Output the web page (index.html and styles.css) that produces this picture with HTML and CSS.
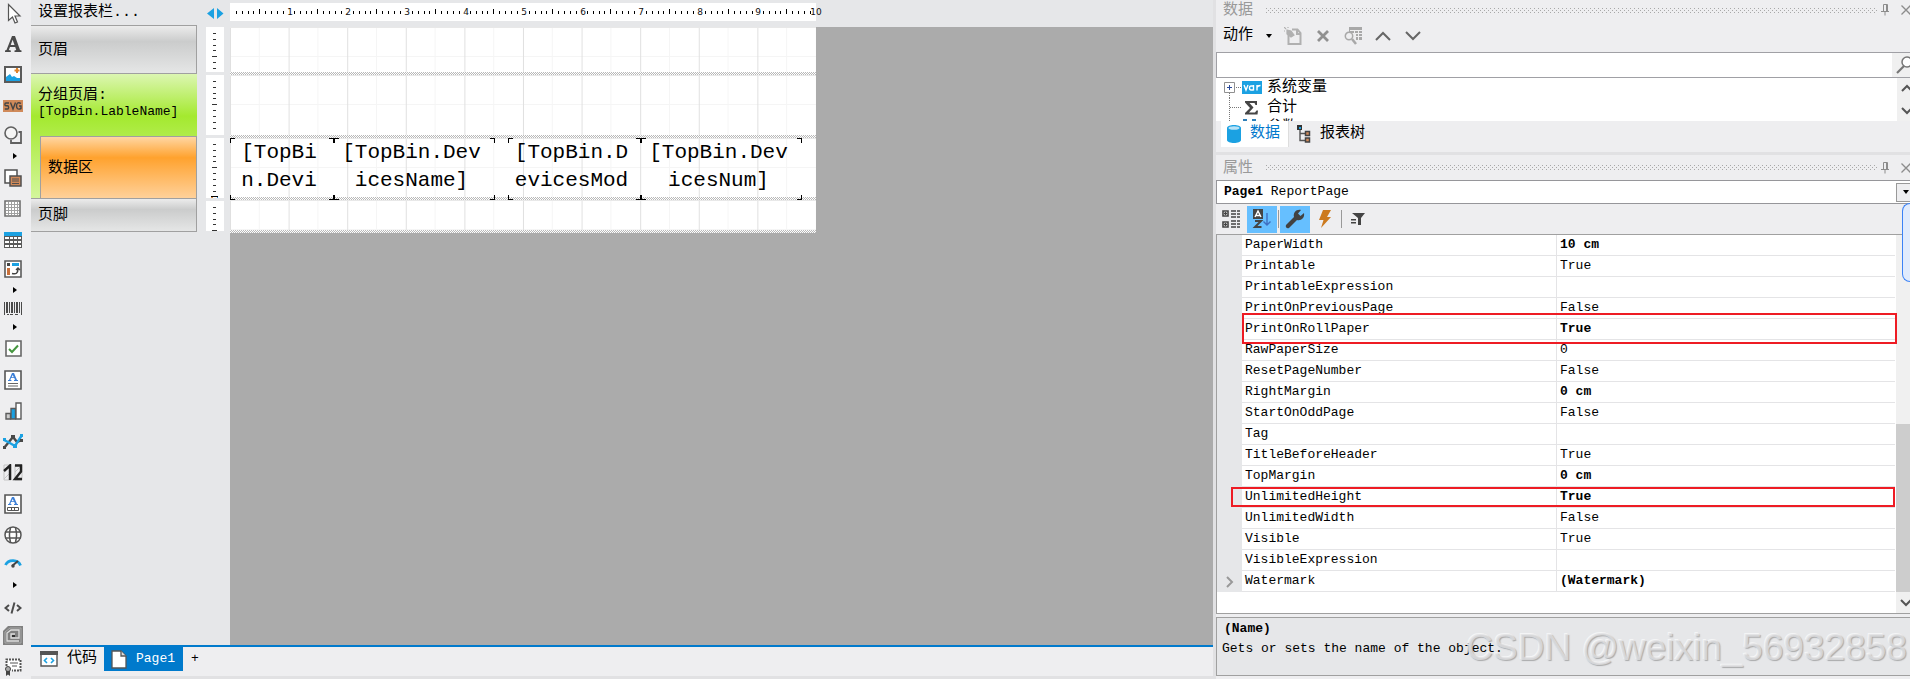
FILE: index.html
```html
<!DOCTYPE html>
<html lang="zh-CN">
<head>
<meta charset="utf-8">
<title>Report designer</title>
<link rel="stylesheet" href="styles.css">
</head>
<body>
<svg class="defs" aria-hidden="true">
  <symbol id="ticks-h" viewBox="0 0 59 18"><path fill="#000" d="M6 8h1v3h-1zM12 8h1v3h-1zM18 8h1v3h-1zM23 8h1v3h-1zM29 6h1v5h-1zM35 8h1v3h-1zM41 8h1v3h-1zM47 8h1v3h-1zM53 8h1v3h-1z"/></symbol>
  <symbol id="ticks-v" viewBox="0 0 18 60"><path fill="#333" d="M7 6h3v1h-3zM7 12h3v1h-3zM7 18h3v1h-3zM7 23h3v1h-3zM6 29h5v1h-5zM7 35h3v1h-3zM7 41h3v1h-3zM7 47h3v1h-3zM7 53h3v1h-3z"/></symbol>
  <symbol id="pin" viewBox="0 0 9 12"><path d="M2.500 7V.5h4V7M5.500 1v6M0 7.500h8M4 8v3.500" fill="none" stroke="#8c8c8c"/></symbol>
  <symbol id="close" viewBox="0 0 9 10"><path d="M.5 .5l9 9M9.500 .5l-9 9" fill="none" stroke="#8c8c8c" stroke-width="1.300"/></symbol>
</svg>
<div class="app">
  <nav class="tools" aria-label="工具">
    <button class="tool short" aria-label="选择"><svg width="20" height="22" viewBox="0 0 20 22"><path d="M5.500 1.500v16l4-3.500 2.500 6 2.500-1-2.500-6H17z" fill="#fff" stroke="#555" stroke-width="1.200"/></svg></button>
    <button class="tool" aria-label="文本"><svg width="18" height="18" viewBox="0 0 18 18"><path fill="#4a4a4a" fill-rule="evenodd" d="M8 1h3l5 14 1.500.5V17h-7v-1.500l1.700-.5-1-3H6l-1.200 3 2 .5V17H1v-1.500l1.500-.5zM8.600 4.800L6.700 10h3.800z"/></svg></button>
    <button class="tool" aria-label="图片"><svg width="18" height="17" viewBox="0 0 18 17"><path d="M1 1h16v15H1z" fill="#fff" stroke="#5a5a5a" stroke-width="2"/><path d="M2 11l4-3 2 3 2-1 3 2h3v3H2z" fill="#1ba1e2"/><path d="M13 2v5M10.500 4.500h5" stroke="#e0822a" stroke-width="2"/></svg></button>
    <button class="tool" aria-label="SVG"><svg width="20" height="12" viewBox="0 0 20 12"><path fill="#d08a5a" d="M0 0h20v12H0z"/><path d="M6 3H3C1.500 3 1.500 5.800 3 5.800h1.500c1.500 0 1.500 3.200 0 3.200H1.800M7.500 2.500L10 9l2.500-6.500M18 3.500c-3-2-4.500 0-4.500 2.500s1.500 4 4.500 2.500V6h-2" fill="none" stroke="#444" stroke-width="1.400"/></svg></button>
    <button class="tool short" aria-label="形状"><svg width="18" height="18" viewBox="0 0 18 18"><circle cx="7" cy="7" r="6" fill="#f5f5f5" stroke="#606060" stroke-width="1.600"/><path d="M14.500 6H17v11H7v-3" fill="none" stroke="#606060" stroke-width="1.800"/></svg></button>
    <button class="more" aria-label="更多形状"></button>
    <button class="tool" aria-label="子报表"><svg width="18" height="18" viewBox="0 0 18 18"><path d="M1 1h12v13H1z" fill="#fff" stroke="#505050" stroke-width="1.500"/><path d="M6 7h11v10H6z" fill="#d08a5a" stroke="#505050" stroke-width="1.500"/><path d="M8 10h7M8 12h7M8 14.500h7" stroke="#505050"/></svg></button>
    <button class="tool" aria-label="表格线"><svg width="18" height="18" viewBox="0 0 18 18"><path d="M1 1h15v15H1z" fill="#fff" stroke="#707070" stroke-width="1.600"/><path d="M4.500 2v13M7.500 2v13M10.500 2v13M13.500 2v13M2 4.500h13M2 7.500h13M2 10.500h13M2 13.500h13" stroke="#a0a0a0"/></svg></button>
    <button class="tool" aria-label="表格"><svg width="18" height="16" viewBox="0 0 18 16"><path fill="#5a5a5a" d="M0 3h18v13H0z"/><path fill="#1ba1e2" d="M0 0h18v4H0z"/><path fill="#fff" d="M1 5h4v2H1zM6 5h3v2H6zM10 5h3v2h-3zM14 5h3v2h-3zM1 9h4v2H1zM6 9h3v2H6zM10 9h3v2h-3zM14 9h3v2h-3zM1 13h4v2H1zM6 13h3v2H6zM10 13h3v2h-3zM14 13h3v2h-3z"/></svg></button>
    <button class="tool short" aria-label="矩阵"><svg width="18" height="18" viewBox="0 0 18 18"><path d="M1 1h16v16H1z" fill="#fff" stroke="#5a5a5a" stroke-width="1.600"/><path fill="#444" d="M3 3h3v3H3z"/><path fill="#1ba1e2" d="M8 3h7v3H8z"/><path fill="#c9703a" d="M3 8h3v7H3z"/><path d="M8 13.500c4 1 6 0 6-5M12 10l2-2 2 2" fill="none" stroke="#444" stroke-width="1.500"/></svg></button>
    <button class="more" aria-label="更多矩阵"></button>
    <button class="tool low" aria-label="条码"><svg width="18" height="13" viewBox="0 0 18 13"><path fill="#4a4a4a" d="M0 0h1v13H0zM2 0h2v11H2zM5 0h1v11H5zM7 0h2v11H7zM10 0h1v11h-1zM12 0h2v11h-2zM15 0h1v11h-1zM17 0h1v13h-1zM3 12h2v1H3zM6 12h3v1H6zM11 12h3v1h-3z"/></svg></button>
    <button class="more" aria-label="更多条码"></button>
    <button class="tool" aria-label="复选框"><svg width="17" height="17" viewBox="0 0 17 17"><path d="M1 1h15v15H1z" fill="#fff" stroke="#666" stroke-width="1.600"/><path d="M4 9l3 3 6-6.500" fill="none" stroke="#45963f" stroke-width="2"/></svg></button>
    <button class="tool" aria-label="富文本"><svg width="18" height="20" viewBox="0 0 18 20"><path d="M1 1h16v18H1z" fill="#fff" stroke="#555" stroke-width="1.600"/><path fill="#3d7fd6" fill-rule="evenodd" d="M8 3h2l3 7h1v1h-4v-1h1l-.7-2H7l-.6 2h1v1H4v-1h1zM8.700 5L7.600 7.200h2.200z"/><path d="M4 13.500h10M4 16h10" stroke="#666"/></svg></button>
    <button class="tool" aria-label="图表"><svg width="17" height="18" viewBox="0 0 17 18"><path d="M1 11.500h4.500V17H1z" fill="#ccc" stroke="#5a5a5a" stroke-width="1.400"/><path d="M6 6.500h4.500V17H6z" fill="#1ba1e2" stroke="#5a5a5a" stroke-width="1.400"/><path d="M11 1h5v16h-5z" fill="#fff" stroke="#5a5a5a" stroke-width="1.400"/></svg></button>
    <button class="tool" aria-label="迷你图"><svg width="20" height="16" viewBox="0 0 20 16"><path d="M1 14L10 3l4 5 5-2" fill="none" stroke="#484848" stroke-width="2.400"/><path d="M1 6l4 2 7 4 7-11" fill="none" stroke="#1ba1e2" stroke-width="2.400"/><path fill="#484848" d="M8 1h4v4H8zM0 12h3v3H0zM17 5h3v3h-3z"/><path fill="#1ba1e2" d="M0 4h3v3H0zM10 10h4v4h-4zM17 0h3v3h-3z"/></svg></button>
    <button class="tool" aria-label="邮政编码"><svg width="20" height="17" viewBox="0 0 20 17"><path d="M1 1h7v15H1zM12 1h7v15h-7zM1 8l7-7M1 15l7-7M12 8l7-7" fill="none" stroke="#c4c4c4"/><path d="M1 7l6-5.500V16M12 1.500h6v6L12 15h7" fill="none" stroke="#222" stroke-width="2.400"/></svg></button>
    <button class="tool" aria-label="单元格文本"><svg width="18" height="20" viewBox="0 0 18 20"><path d="M1 1h16v18H1z" fill="#fff" stroke="#555" stroke-width="1.600"/><path fill="#3d7fd6" fill-rule="evenodd" d="M8 3h2l3 7h1v1h-4v-1h1l-.7-2H7l-.6 2h1v1H4v-1h1zM8.700 5L7.600 7.200h2.200z"/><path d="M3.500 13.500h11v3h-11zM7.500 13v4M10.500 13v4" fill="none" stroke="#555"/></svg></button>
    <button class="tool" aria-label="地图"><svg width="18" height="18" viewBox="0 0 18 18"><circle cx="9" cy="9" r="8" fill="#fff" stroke="#555" stroke-width="1.500"/><path d="M1 6h16M1 12h16M6.500 2c-1.500 5-1.500 9 0 14M11.500 2c1.500 5 1.500 9 0 14" fill="none" stroke="#555" stroke-width="1.500"/></svg></button>
    <button class="tool low" aria-label="仪表"><svg width="18" height="11" viewBox="0 0 18 11"><path d="M1.500 8A8 7 0 0 1 16.500 8.500" fill="none" stroke="#1ba1e2" stroke-width="2.800"/><path d="M8 9l6-5" stroke="#444" stroke-width="2"/><circle cx="9" cy="9" r="1.700" fill="#444"/></svg></button>
    <button class="more tall" aria-label="更多仪表"></button>
    <button class="tool low" aria-label="HTML"><svg width="18" height="12" viewBox="0 0 18 12"><path d="M5 3L1.500 6 5 9M13 3l3.500 3L13 9M10.500.5l-3 11" fill="none" stroke="#4c4c4c" stroke-width="2"/></svg></button>
    <button class="tool" aria-label="RFID"><svg width="20" height="20" viewBox="0 0 20 20"><path d="M5 0h15v19H0V5z" fill="#808080"/><path d="M16 15H4V7l4-3h8v8H8V8h4" fill="none" stroke="#ddd" stroke-width="1.300"/><path d="M18 17H2V6l5-4h11z" fill="none" stroke="#a8a8a8"/><path fill="#333" d="M9 9h3v2H9z"/></svg></button>
    <button class="tool" aria-label="签名"><svg width="18" height="18" viewBox="0 0 18 18"><path d="M2.500 8V1.500h14v11H8" fill="#fff" stroke="#555" stroke-width="2" stroke-dasharray="2 1"/><path d="M6 5h8M8 8h5" stroke="#555"/><circle cx="4" cy="11" r="2.500" fill="#aaa" stroke="#444"/><path d="M2 13v5l2-1.500L6 18v-5z" fill="#444"/></svg></button>
  </nav>

  <main class="designer">
    <div class="work">
      <section class="bands">
        <button class="setup">设置报表栏...</button>
        <div class="band grey head">页眉</div>
        <div class="band green">
          <p>分组页眉:<br>[TopBin.LableName]</p>
          <div class="band orange">数据区</div>
        </div>
        <div class="band grey foot">页脚</div>
      </section>
      <section class="side-rulers">
        <svg class="arrows" width="18" height="11" viewBox="0 0 18 11"><path fill="#1ba1e2" d="M8 0v11L1 5.500zM11 0v11l6.500-5.500z"/></svg>
        <svg class="vr r1" width="18" height="45"><use href="#ticks-v" width="18" height="60"/></svg>
        <svg class="vr r2" width="18" height="60"><use href="#ticks-v" width="18" height="60"/></svg>
        <svg class="vr r3" width="18" height="60"><use href="#ticks-v" width="18" height="60"/><path d="M5 58h7v1h-7z"/><path fill="#d98c3f" d="M5 59h2v1h-2z"/><path fill="#2a7fd0" d="M11 59h1v1h-1z"/></svg>
        <svg class="vr r4" width="18" height="30"><use href="#ticks-v" width="18" height="60"/></svg>
      </section>
      <section class="canvas">
        <div class="top-ruler">
          <svg class="hr" width="586" height="18">
            <g><use href="#ticks-h" width="59" height="18"/><use href="#ticks-h" x="58" width="59" height="18"/><use href="#ticks-h" x="117" width="59" height="18"/><use href="#ticks-h" x="176" width="59" height="18"/><use href="#ticks-h" x="234" width="59" height="18"/><use href="#ticks-h" x="293" width="59" height="18"/><use href="#ticks-h" x="351" width="59" height="18"/><use href="#ticks-h" x="410" width="59" height="18"/><use href="#ticks-h" x="469" width="59" height="18"/><use href="#ticks-h" x="527" width="59" height="18"/></g>
            <g class="nums"><text x="60" y="12">1</text><text x="118" y="12">2</text><text x="177" y="12">3</text><text x="236" y="12">4</text><text x="294" y="12">5</text><text x="353" y="12">6</text><text x="411" y="12">7</text><text x="470" y="12">8</text><text x="528" y="12">9</text><text x="586" y="12">10</text></g>
          </svg>
        </div>
        <div class="desk">
          <div class="paper">
            <div class="strip s1"></div>
            <div class="strip s2"></div>
            <div class="strip s3">
              <div class="objects">
                <div class="obj w1">[TopBi<br>n.Devi</div>
                <div class="obj w2">[TopBin.Dev<br>icesName]</div>
                <div class="obj w3">[TopBin.D<br>evicesMod</div>
                <div class="obj w4">[TopBin.Dev<br>icesNum]</div>
              </div>
            </div>
            <div class="strip s4"></div>
          </div>
        </div>
      </section>
    </div>
    <div class="pages">
      <button class="page-tab code"><svg width="18" height="16" viewBox="0 0 18 16"><path d="M1 1h16v14H1z" fill="#fff" stroke="#555" stroke-width="1.400"/><path fill="#555" d="M0 0h18v4H0z"/><path d="M7 7L4.500 9.500 7 12M11 7l2.500 2.500L11 12" fill="none" stroke="#1ba1e2" stroke-width="1.600"/></svg>代码</button>
      <button class="page-tab active"><svg width="16" height="19" viewBox="0 0 16 19"><path d="M1 1h9l5 5v12H1z" fill="#fff" stroke="#555" stroke-width="1.300"/><path d="M10 1v5h5" fill="#ddd" stroke="#555" stroke-width="1.300"/></svg>Page1</button>
      <button class="page-tab add">+</button>
    </div>
  </main>

  <aside class="side">
    <header class="title"><span>数据</span><i class="grip"></i><svg width="9" height="12"><use href="#pin"/></svg><svg width="9" height="10"><use href="#close"/></svg></header>
    <div class="actions">
      <button class="menu">动作<i class="caret"></i></button>
      <button aria-label="新建"><svg width="18" height="18" viewBox="0 0 18 18"><path d="M4.500 8v9h12V6l-3-3.500H8M13 3v4h4" fill="none" stroke="#b0b0b0" stroke-width="2"/><path d="M0 0l2 2M4 0v1M0 4h1M3 3l4 1 3 4-3 2-4-3z" fill="#b0b0b0" stroke="#b0b0b0" stroke-width="1.200"/></svg></button>
      <button aria-label="删除"><svg width="18" height="18" viewBox="0 0 18 18"><path d="M4 4l10 10M14 4L4 14" stroke="#909090" stroke-width="2.800"/></svg></button>
      <button aria-label="查看"><svg width="18" height="18" viewBox="0 0 18 18"><path fill="#a8a8a8" d="M5 0h13v13h-6V6H5z"/><path d="M6 3.500h12M11 6.500h7M11 9.500h7M10.500 3v3M14.500 3v10" stroke="#eeeef0"/><circle cx="5" cy="9" r="3.700" fill="#eeeef0" stroke="#a8a8a8" stroke-width="1.500"/><path d="M8 12l4 5" stroke="#a8a8a8" stroke-width="2.500"/></svg></button>
      <button aria-label="上移"><svg width="18" height="18" viewBox="0 0 18 18"><path d="M2 13l7-7 7 7" fill="none" stroke="#666" stroke-width="2"/></svg></button>
      <button aria-label="下移"><svg width="18" height="18" viewBox="0 0 18 18"><path d="M2 5l7 7 7-7" fill="none" stroke="#666" stroke-width="2"/></svg></button>
    </div>
    <div class="search"><input type="text" aria-label="搜索"><button aria-label="搜索"><svg width="14" height="18" viewBox="0 0 14 18"><circle cx="11" cy="6" r="5" fill="#fff" stroke="#777" stroke-width="1.500"/><path d="M8 10l-7 7" stroke="#777" stroke-width="2.200"/></svg></button></div>
    <div class="tree">
      <ul>
        <li><svg width="38" height="20" viewBox="0 0 38 20"><path d="M.5 4.500h10v10H.5z" fill="#fff" stroke="#909090"/><path d="M3 9.500h5M5.500 7v5" stroke="#2a4a9a"/><path d="M12 9.500h6M5.500 15v5" stroke="#777" stroke-dasharray="1 1"/><path fill="#1ba1e2" d="M18 3h20v13H18z"/><path d="M20 7l2 5 2-5M29.500 7v5.500M29.500 8h-2.500c-2 0-2 4 0 4h2.500M33 12.500V7M33 9.500c.5-1.500 1.500-2 3.500-2" fill="none" stroke="#fff" stroke-width="1.400"/></svg>系统变量</li>
        <li><svg width="38" height="20" viewBox="0 0 38 20"><path d="M5.500 0v20M6 9.500h12" stroke="#777" stroke-dasharray="1 1"/><path fill="#454545" d="M21 3h12v4h-1.500l-1-2h-5l4 4.500-4.500 5H31l1.500-2H34l-.5 4H21v-1.500L26 10l-5-5.500z"/></svg>合计</li>
        <li><svg width="38" height="20" viewBox="0 0 38 20"><path d="M5.500 0v20" stroke="#777" stroke-dasharray="1 1"/><path d="M23 2h-3v14h3M28 2h3v14h-3" fill="none" stroke="#2f7fb8" stroke-width="2"/></svg>参数</li>
      </ul>
      <div class="mini-scroll"><svg width="13" height="43" viewBox="0 0 13 43"><path d="M5 13l5-5 5 5M5 30l5 5 5-5" fill="none" stroke="#555" stroke-width="2"/></svg></div>
    </div>
    <div class="side-tabs">
      <button class="on"><svg width="14" height="18" viewBox="0 0 14 18"><path fill="#1ba1e2" d="M0 3c0-4 14-4 14 0v12c0 4-14 4-14 0z"/><ellipse cx="7" cy="3" rx="5.500" ry="1.800" fill="#b8e2f6"/></svg>数据</button>
      <button><svg width="14" height="18" viewBox="0 0 14 18"><path d="M3 5v10.500h5M3 8.500h5" fill="none" stroke="#555" stroke-width="1.400"/><path fill="#333" d="M0 0h5v5H0z"/><path fill="#1ba1e2" d="M2 2h2v2H2z"/><path d="M8.500 6.500h4v4h-4zM8.500 13h4v4h-4z" fill="#d08a5a" stroke="#444" stroke-width="1.500"/></svg>报表树</button>
    </div>
    <header class="title second"><span>属性</span><i class="grip"></i><svg width="9" height="12"><use href="#pin"/></svg><svg width="9" height="10"><use href="#close"/></svg></header>
    <button class="combo" aria-haspopup="listbox"><span><b>Page1</b> ReportPage</span><span class="drop"><i class="caret"></i></span></button>
    <div class="prop-tools">
      <button aria-label="分类"><svg width="18" height="18" viewBox="0 0 18 18"><path d="M1 1h5v5H1zM1 12h5v5H1z" fill="#fff" stroke="#444" stroke-width="1.600"/><path d="M2 3.500h3M3.500 2v3M2 14.500h3M3.500 13v3M9 1h5M15 1h3M9 4h5M15 4h3M9 7h5M15 7h3M9 11h5M15 11h3M9 14h5M15 14h3M9 17h5M15 17h3" stroke="#444" stroke-width="1.300"/></svg></button>
      <button class="hot" aria-label="排序"><svg width="20" height="20" viewBox="0 0 20 20"><path fill="#444" d="M1 0h10v10H1z"/><path d="M3 8l3-6 3 6M4 6.500h4" fill="none" stroke="#fff" stroke-width="1.400"/><path d="M3 12h6l-6 6h6.500" fill="none" stroke="#444" stroke-width="2"/><path d="M15 4v12M11.500 12.500L15 16l3.500-3.500" fill="none" stroke="#3f6fc0" stroke-width="1.400"/></svg></button>
      <i class="sep"></i>
      <button class="hot" aria-label="属性"><svg width="20" height="20" viewBox="0 0 20 20"><path fill="#424242" d="M1 16l8-8c-1-4 2-8 7-7l-3 3.500 2.500 2.500L19 4c1 5-3 8-7 7l-8 8c-2 1-4-1-3-3z"/></svg></button>
      <button class="bolt" aria-label="事件"><svg width="14" height="20" viewBox="0 0 14 20"><path fill="#cc7a1e" d="M5 1h8L9 8h4L3 19l2.500-8H1z"/></svg></button>
      <i class="sep"></i>
      <button class="filter" aria-label="筛选"><svg width="14" height="14" viewBox="0 0 14 14"><path fill="#444" d="M1 1h13l-4 5v7H7V6zM0 7h5v1.500H0zM0 10h5v1.500H0z"/></svg></button>
    </div>
    <div class="props">
      <div class="props-main">
        <table>
          <colgroup><col class="c-gut"><col class="c-name"><col></colgroup>
          <tbody>
          <tr><td></td><th>PaperWidth</th><td><b>10 cm</b></td></tr>
          <tr><td></td><th>Printable</th><td>True</td></tr>
          <tr><td></td><th>PrintableExpression</th><td></td></tr>
          <tr><td></td><th>PrintOnPreviousPage</th><td>False</td></tr>
          <tr><td></td><th>PrintOnRollPaper</th><td><b>True</b></td></tr>
          <tr><td></td><th>RawPaperSize</th><td>0</td></tr>
          <tr><td></td><th>ResetPageNumber</th><td>False</td></tr>
          <tr><td></td><th>RightMargin</th><td><b>0 cm</b></td></tr>
          <tr><td></td><th>StartOnOddPage</th><td>False</td></tr>
          <tr><td></td><th>Tag</th><td></td></tr>
          <tr><td></td><th>TitleBeforeHeader</th><td>True</td></tr>
          <tr><td></td><th>TopMargin</th><td><b>0 cm</b></td></tr>
          <tr><td></td><th>UnlimitedHeight</th><td><b>True</b></td></tr>
          <tr><td></td><th>UnlimitedWidth</th><td>False</td></tr>
          <tr><td></td><th>Visible</th><td>True</td></tr>
          <tr><td></td><th>VisibleExpression</th><td></td></tr>
          <tr><td><svg width="8" height="12" viewBox="0 0 8 12"><path d="M1 1l5 5-5 5" fill="none" stroke="#999" stroke-width="2"/></svg></td><th>Watermark</th><td><b>(Watermark)</b></td></tr>
          </tbody>
        </table>
        <div class="mark m1"></div>
        <div class="mark m2"></div>
      </div>
      <div class="scroll"><div class="thumb"></div><svg width="14" height="21" viewBox="0 0 14 21"><path d="M5 8l5 5 5-5" fill="none" stroke="#555" stroke-width="2"/></svg></div>
      <div class="handle"></div>
    </div>
    <div class="desc"><b>(Name)</b><p>Gets or sets the name of the object.</p><div class="stamp">CSDN @weixin_56932858</div></div>
  </aside>
</div>
</body>
</html>
```
FILE: styles.css
```css
* { box-sizing: border-box; }
body {
  margin: 0;
  font: 13px/16px "Liberation Mono", "Noto Sans CJK SC", monospace;
  color: #000;
  background: #e1e1e3;
}
button { margin: 0; padding: 0; border: 0; background: none; font: inherit; color: inherit; }
svg { display: block; flex: none; }
p { margin: 0; }
.defs { position: absolute; width: 0; height: 0; }

.app { display: grid; grid-template-columns: 31px minmax(0, 1fr) 694px; height: 100vh; overflow: hidden; }

/* object toolbar */
.tools { display: flex; flex-direction: column; background: #eeeef0; overflow: hidden; }
.tool { display: flex; flex: none; align-items: center; justify-content: center; height: 31px; width: 26px; }
.tool.short { height: 28px; }
.tool.low { height: 24px; }
.more { display: flex; flex: none; align-items: center; height: 13px; padding-left: 13px; }
.more.tall { height: 22px; }
.more::before { content: ""; border: 3px solid transparent; border-left: 4px solid #000; border-right: 0; }

/* designer */
.designer { display: flex; flex-direction: column; min-width: 0; margin-right: 3px; padding-bottom: 3px; }
.work { display: flex; flex: 1; min-height: 0; background: #e6e7e9; }
.bands { width: 166px; font-size: 15px; line-height: 18px; }
.setup { display: block; height: 25px; padding: 0 0 0 7px; line-height: 18px; }
.band { border: 1px solid #a0a0a0; border-width: 1px 1px 0 0; padding-left: 7px; }
.grey { display: flex; align-items: center; background: linear-gradient(#ececec, #cbcccc 33%, #e5e6e6); }
.head { height: 48px; padding-top: 2px; }
.foot { height: 34px; padding-top: 2px; border-bottom-width: 1px; }
.green { height: 125px; padding-top: 14px; background: linear-gradient(#dcf6b2, #a4e92f 34%, #d4f69c); border-right: 0; }
.green p { height: 48px; line-height: 16px; font-size: 13px; }
.green p::first-line { font-size: 15px; }
.orange { display: flex; align-items: center; height: 62px; margin-left: 2px; padding: 2px 0 0 7px; border-left-width: 1px; background: linear-gradient(#ffd6a3, #ffa22e 34%, #ffd19a); }

.side-rulers { display: flex; flex-direction: column; gap: 3px; margin-left: 9px; }
.arrows { margin: 8px 0 5px; }
.vr { background: #fff; shape-rendering: crispEdges; }

.canvas { display: flex; flex: 1; flex-direction: column; min-width: 0; margin-left: 6px; }
.top-ruler { height: 27px; padding-top: 3px; }
.hr { background: #fff; overflow: visible; shape-rendering: crispEdges; }
.nums { font: 9px "DejaVu Sans", sans-serif; text-anchor: middle; fill: #111; }
.desk { flex: 1; background: #ababab; }
.paper { width: 586px; }
.strip {
  position: relative;
  border-top: 1px solid #e8e8e8;
  background:
    linear-gradient(to left, #e0e0e0 1px, transparent 1px) 1px 0 / 10% 100%,
    linear-gradient(to right, transparent 29px, #f5f5f5 29px, #f5f5f5 30px, transparent 30px) 0 0 / 10% 100%,
    linear-gradient(transparent 28px, #f5f5f5 28px, #f5f5f5 29px, transparent 29px),
    #fff;
}
.strip::after {
  content: ""; display: block; height: 3px;
  background: conic-gradient(#b8b8b8 25%, #fff 0 50%, #b8b8b8 0 75%, #fff 0) 0 0 / 2px 2px;
}
.s1, .s2, .s3, .s4 { display: flex; flex-direction: column; justify-content: flex-end; }
.s1 { height: 48px; }
.s2 { height: 63px; }
.s3 { height: 62px; }
.s4 { height: 33px; }
.objects { position: absolute; z-index: 1; inset: -1px 0 0; display: flex; }
.obj {
  --h: linear-gradient(#000, #000);
  padding: 1px 6px 0 0;
  font-size: 21px; line-height: 28px; text-align: center; white-space: nowrap;
  background:
    var(--h) 0 0 / 5px 1px no-repeat, var(--h) 0 0 / 1px 5px no-repeat,
    var(--h) 100% 0 / 5px 1px no-repeat, var(--h) 100% 0 / 1px 5px no-repeat,
    var(--h) 0 100% / 5px 1px no-repeat, var(--h) 0 100% / 1px 5px no-repeat,
    var(--h) 100% 100% / 5px 1px no-repeat, var(--h) 100% 100% / 1px 5px no-repeat;
}
.w1 { width: 104px; }
.w2 { width: 161px; }
.w3 { width: 133px; margin-left: 13px; }
.w4 { width: 161px; }

.pages { display: flex; height: 31px; border-top: 2px solid #007acc; background: #eeeef0; }
.page-tab { display: flex; align-items: center; gap: 9px; height: 24px; padding: 0 8px; }
.page-tab.code { padding: 0 7px 0 9px; font-size: 15px; }
.page-tab.active { padding: 0 8px 0 7px; background: #007acc; color: #fff; }

/* right side panels */
.side { position: relative; display: flex; flex-direction: column; min-width: 0; padding-bottom: 3px; background: #eeeef0; }
.title { display: flex; flex: none; align-items: center; height: 20px; padding-left: 7px; color: #999; font-size: 15px; }
.title span { padding-top: 2px; line-height: 18px; }
.grip {
  flex: 1; height: 5px; margin: 0 4px 0 13px;
  background:
    conic-gradient(at 1px 1px, transparent 75%, #a8a8a8 0) 0 0 / 4px 4px,
    conic-gradient(at 1px 1px, transparent 75%, #a8a8a8 0) 2px 2px / 4px 4px;
}
.title svg + svg { margin-left: 11px; }
.title.second { height: 28px; border-top: 3px solid #e1e1e3; }
.actions { display: flex; flex: none; align-items: center; gap: 12px; height: 32px; padding-left: 7px; }
.menu { display: flex; align-items: center; gap: 13px; font-size: 15px; line-height: 18px; }
.caret { border: 3px solid transparent; border-top: 4px solid #000; border-bottom: 0; }
.search { display: flex; flex: none; height: 26px; border: 1px solid #a0a0a5; border-right: 0; }
.search input { flex: 1; min-width: 0; border: 0; padding: 0 6px; outline: 0; background: #fff; font: inherit; }
.search button { padding-left: 4px; background: #f0f0f0; }
.tree { display: flex; flex: none; height: 43px; background: #fff; overflow: hidden; }
.tree ul { flex: 1; margin: 0; padding: 0 0 0 8px; list-style: none; font-size: 15px; line-height: 20px; }
.tree li { display: flex; gap: 5px; height: 20px; }
.mini-scroll { background: #f0f0f0; }
.side-tabs { display: flex; flex: none; align-items: flex-start; height: 31px; padding-left: 5px; font-size: 15px; }
.side-tabs button { display: flex; align-items: center; gap: 9px; height: 26px; padding: 0 8px; }
.side-tabs .on { padding: 0 8px 0 6px; background: #fff; color: #0078cc; border-right: 1px solid #ddd; }
.combo { display: flex; flex: none; align-items: center; justify-content: space-between; height: 24px; padding-left: 7px; border: 1px solid #96969a; border-right: 0; background: #fff; }
.drop { display: flex; align-items: center; justify-content: flex-end; width: 14px; height: 19px; padding-right: 1px; border: 1px solid #999; border-right: 0; background: #eeeef0; }
.prop-tools { display: flex; flex: none; align-items: center; height: 30px; padding-left: 6px; }
.prop-tools button { display: flex; align-items: center; justify-content: center; height: 27px; }
.prop-tools .hot { width: 30px; background: #66bfff; }
.prop-tools button:first-child { margin-right: 7px; }
.prop-tools .sep { width: 1px; height: 18px; margin: 0 1px; background: #999; }
.prop-tools .bolt { margin: 0 8px 0 8px; }
.prop-tools .filter { margin-left: 8px; }
.props { position: relative; display: flex; flex: 1; min-height: 0; border: 1px solid #a0a0a0; border-right: 0; background: #fff; }
.props-main { position: relative; flex: 1; min-width: 0; padding-right: 1px; }
.props table { width: 100%; table-layout: fixed; border-collapse: separate; border-spacing: 0; }
.c-gut { width: 25px; }
.c-name { width: 315px; }
.props th, .props td { padding: 0 3px; border-bottom: 1px solid #e4e4e6; font-weight: 400; text-align: left; line-height: 16px; height: 21px; }
.props th { border-right: 1px solid #e4e4e6; }
.props td:first-child { border: 0; background: #e6e7e9; padding-left: 9px; }
.mark { position: absolute; border: 2px solid #ee1c24; }
.m1 { top: 78px; left: 25px; right: -1px; height: 31px; }
.m2 { top: 252px; left: 14px; right: 1px; height: 20px; }
.scroll { display: flex; flex-direction: column; width: 14px; background: #f0f0f0; }
.thumb { flex: 1; margin-top: 189px; background: #cdcdcd; }
.handle { position: absolute; top: -32px; right: 0; width: 8px; height: 79px; border: 1px solid #3b82f6; border-right: 0; border-radius: 8px 0 0 8px; background: #e0ebfd; }
.desc { position: relative; flex: none; height: 59px; margin-top: 3px; padding: 3px 0 0 5px; border: 1px solid #a0a0a0; border-right: 0; background: #e6e7e9; }
.desc b { display: block; padding-left: 2px; }
.desc p { padding-top: 4px; }
.stamp {
  position: absolute; right: 3px; bottom: 6px;
  font: 37px/42px "Liberation Sans", sans-serif; white-space: nowrap;
  color: rgba(226, 226, 228, .75);
  text-shadow: 1px 1px 1px rgba(120, 120, 120, .55), -1px -1px 0 rgba(255, 255, 255, .6);
}
```
